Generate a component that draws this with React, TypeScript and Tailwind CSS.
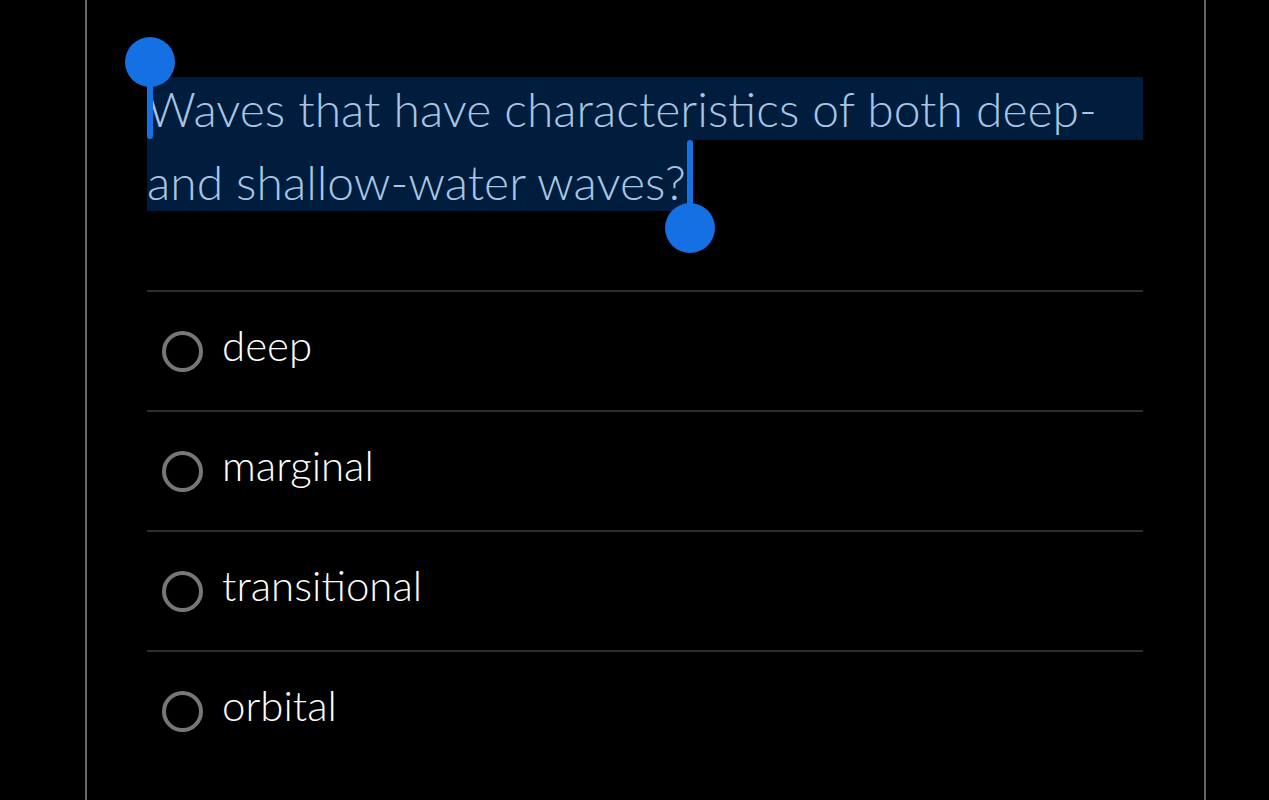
import React from "react";

const options = ["deep", "marginal", "transitional", "orbital"];

export default function App() {
  return (
    <div className="w-[1269px] h-[800px] bg-black overflow-hidden" style={{ fontFamily: "'Lato Light', Lato, 'Noto Sans', sans-serif" }}>
      <div className="ml-[85px] w-[1121px] h-full border-x-[2px] border-[#666666] pl-[60px] pr-[61px]">
        <div className="relative pt-[77px]">
          <div className="h-[63px] bg-[#001d3d] text-[#a7c5e4] font-light text-[48px] leading-[63px] whitespace-nowrap">
            Waves that have characteristics of both deep-
          </div>
          <div className="inline-block h-[71px] bg-[#001d3d] text-[#a7c5e4] font-light text-[48px] leading-[58px] pt-[13px] whitespace-nowrap pr-[7px]">
            and shallow-water waves?
          </div>
          {/* start handle */}
          <div className="absolute left-[-22px] top-[37px] w-[50px] h-[50px] rounded-full bg-[#1570e4]" />
          <div className="absolute left-[0px] top-[80px] w-[6px] h-[59px] rounded-b-full bg-[#1570e4]" />
          {/* end handle */}
          <div className="absolute left-[540px] top-[140px] w-[6px] h-[70px] rounded-t-full bg-[#1570e4]" />
          <div className="absolute left-[518px] top-[203px] w-[50px] h-[50px] rounded-full bg-[#1570e4]" />
        </div>
        <div className="mt-[79px] flex flex-col">
          {options.map((o) => (
            <div key={o} className="h-[120px] border-t-[2px] border-[#2e2e2e] flex items-center gap-[19px] pl-[15px]">
              <div className="w-[41px] h-[41px] rounded-full border-[4px] border-[#77777b]" />
              <div className="text-white font-light text-[42px] leading-none pb-[13px]">{o}</div>
            </div>
          ))}
        </div>
      </div>
    </div>
  );
}
